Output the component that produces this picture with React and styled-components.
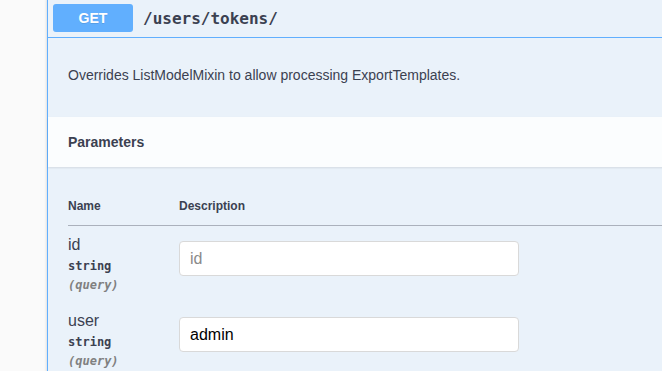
import React from "react";
import styled, { createGlobalStyle } from "styled-components";

const GlobalStyle = createGlobalStyle`
  html, body {
    margin: 0;
    padding: 0;
    background: #fafafa;
  }
  body {
    font-family: "Liberation Sans", Arial, sans-serif;
    color: #3b4151;
  }
`;

const Page = styled.div`
  width: 662px;
  height: 371px;
  overflow: hidden;
  padding-left: 47px;
  box-sizing: border-box;
`;

const OpBlock = styled.section`
  width: 660px;
  margin-top: -2px;
  border: 1px solid #61affe;
  background: rgba(97, 175, 254, 0.1);
  box-shadow: 0 0 3px rgba(0, 0, 0, 0.19);
`;

const Summary = styled.div`
  display: flex;
  align-items: center;
  padding: 5px;
  border-bottom: 1px solid #61affe;
`;

const Method = styled.span`
  min-width: 80px;
  padding: 6px 0;
  border-radius: 3px;
  background: #61affe;
  color: #fff;
  font-size: 14px;
  font-weight: 700;
  line-height: 16px;
  text-align: center;
  text-shadow: 0 1px 0 rgba(0, 0, 0, 0.1);
`;

const Path = styled.span`
  padding: 0 10px;
  font-family: "DejaVu Sans Mono", monospace;
  font-size: 16px;
  font-weight: 700;
  color: #3b4151;
`;

const Description = styled.div`
  padding: 29px 20px 33px;
  font-size: 14px;
  line-height: 17px;
`;

const SectionHeader = styled.div`
  display: flex;
  align-items: center;
  min-height: 50px;
  padding: 0 20px;
  background: rgba(255, 255, 255, 0.8);
  box-shadow: 0 1px 2px rgba(0, 0, 0, 0.1);
  font-size: 14px;
  font-weight: 700;
`;

const TableWrap = styled.div`
  padding: 20px;
`;

const Table = styled.table`
  width: 100%;
  border-collapse: collapse;
`;

const Th = styled.th`
  padding: 12px 0;
  text-align: left;
  font-size: 12px;
  font-weight: 700;
  border-bottom: 1px solid rgba(59, 65, 81, 0.2);
  width: ${(p) => (p.$narrow ? "111px" : "auto")};
`;

const Td = styled.td`
  padding: 10px 0;
  vertical-align: top;
`;

const ParamName = styled.div`
  font-size: 16px;
`;

const ParamType = styled.div`
  padding: 5px 0;
  font-family: "DejaVu Sans Mono", monospace;
  font-size: 12px;
  font-weight: 700;
`;

const ParamIn = styled.div`
  font-family: "DejaVu Sans Mono", monospace;
  font-size: 12px;
  font-weight: 700;
  font-style: italic;
  color: #808080;
`;

const Input = styled.input`
  display: block;
  box-sizing: border-box;
  width: 340px;
  height: 35px;
  margin: 5px 0 0;
  padding: 8px 10px;
  border: 1px solid #d9d9d9;
  border-radius: 4px;
  background: #fff;
  font-family: "Liberation Sans", Arial, sans-serif;
  font-size: 16px;
  color: #000;
  outline: none;

  &::placeholder {
    color: #8a8a8a;
  }
`;

const params = [
  { name: "id", type: "string", in: "query", value: "" },
  { name: "user", type: "string", in: "query", value: "admin" },
];

const App = () => (
  <>
    <GlobalStyle />
    <Page>
      <OpBlock>
        <Summary>
          <Method>GET</Method>
          <Path>/users/tokens/</Path>
        </Summary>
        <Description>
          Overrides ListModelMixin to allow processing ExportTemplates.
        </Description>
        <SectionHeader>Parameters</SectionHeader>
        <TableWrap>
          <Table>
            <thead>
              <tr>
                <Th $narrow>Name</Th>
                <Th>Description</Th>
              </tr>
            </thead>
            <tbody>
              {params.map((p) => (
                <tr key={p.name}>
                  <Td>
                    <ParamName>{p.name}</ParamName>
                    <ParamType>{p.type}</ParamType>
                    <ParamIn>({p.in})</ParamIn>
                  </Td>
                  <Td>
                    <Input
                      placeholder={p.name}
                      defaultValue={p.value}
                      readOnly
                    />
                  </Td>
                </tr>
              ))}
            </tbody>
          </Table>
        </TableWrap>
      </OpBlock>
    </Page>
  </>
);

export default App;
